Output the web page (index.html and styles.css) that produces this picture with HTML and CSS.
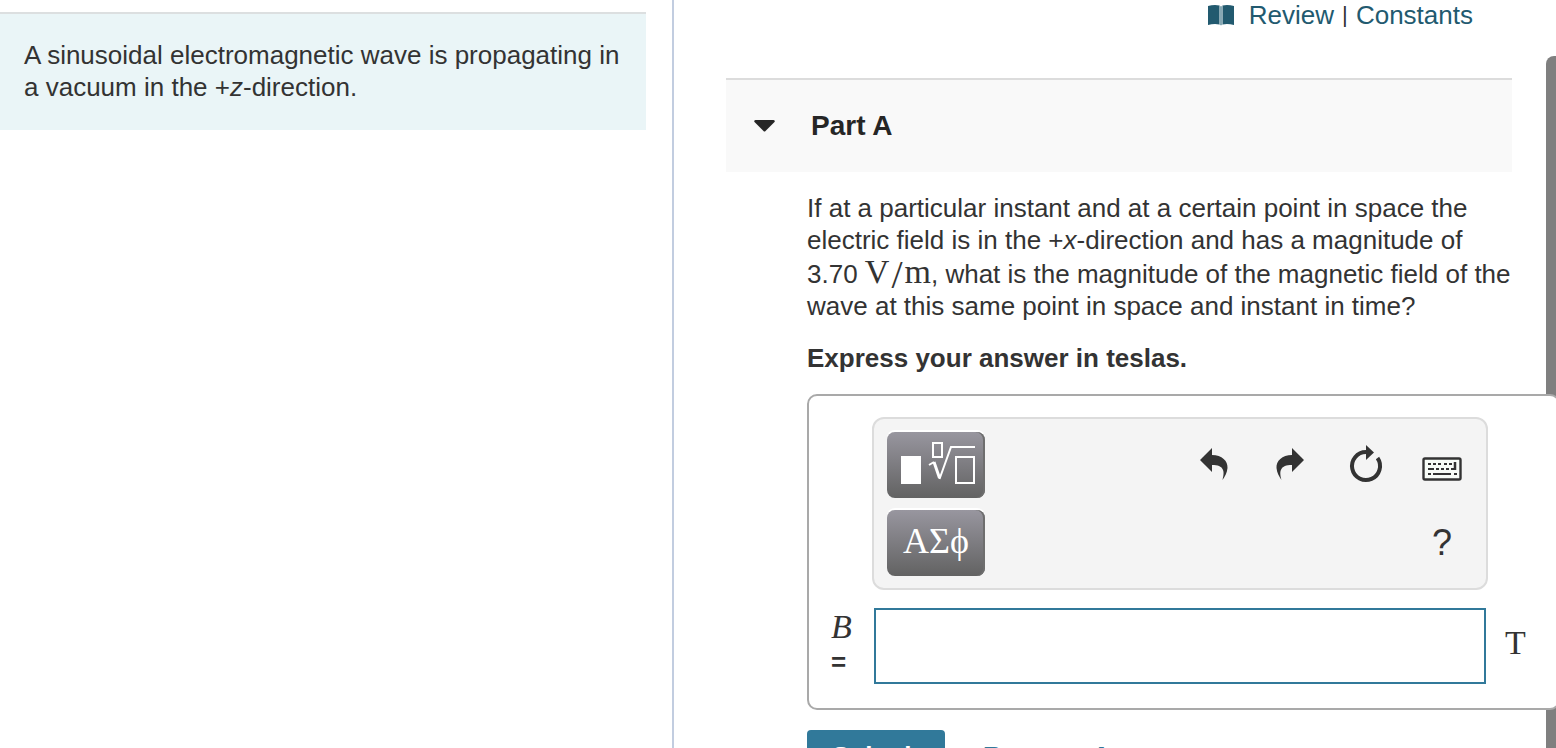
FILE: index.html
```
<!DOCTYPE html>
<html lang="en">
<head>
   <meta charset="utf-8">
   <title>Part A</title>
   <link rel="stylesheet" href="styles.css">
</head>
<body>
<div id="doc">
   <section class="intro-pane">
      <p class="intro">A sinusoidal electromagnetic wave is propagating in a vacuum in the +<em>z</em>-direction.</p>
   </section>

   <main class="problem-pane">
      <div class="scroll-thumb"></div>

      <nav class="resources">
         <svg class="book" viewBox="0 0 26 21" aria-hidden="true">
            <path d="M0 1Q6 -.5 11.5 .5V19.500Q6 18.500 0 20ZM14.500 .5Q20 -.5 26 1V20Q20 18.500 14.500 19.500Z" fill="#225a6f"/>
            <path d="M11.500 .5L13 1.500L14.500 .5V19.500L13 20.500L11.500 19.500Z" fill="#86a8b4"/>
         </svg>
         <a href="#review">Review</a><span class="sep">|</span><a href="#constants">Constants</a>
      </nav>

      <header class="part">
         <button type="button" class="toggle" aria-label="Collapse Part A">
            <svg width="22" height="12" viewBox="0 0 22 12"><path d="M1.500 0H19.500Q21.500 .5 20.500 2L11.500 11Q10.500 12 9.500 11L.5 2Q-.5 .5 1.500 0Z" fill="#262626"/></svg>
         </button>
         <h1>Part A</h1>
      </header>

      <div class="question">
         <p>If at a particular instant and at a certain point in space the electric field is in the +<em>x</em>-direction and has a magnitude of 3.70 <span class="math">V<span class="slash">/</span>m</span>, what is the magnitude of the magnetic field of the wave at this same point in space and instant in time?</p>
         <p class="instructions">Express your answer in teslas.</p>

         <form>
            <div class="answer-box">
               <div class="toolbar">
                  <div class="tool-row">
                     <button type="button" class="palette" aria-label="Templates">
                        <svg width="76" height="44" viewBox="0 0 76 44" fill="none" stroke="#fff">
                           <path d="M3 13H23V41H3Z" fill="#fff" stroke="none"/>
                           <path d="M35 0H44V14H35Z" stroke-width="2"/>
                           <path d="M31 22L36 19" stroke-width="2"/>
                           <path d="M36 19L41.500 35" stroke-width="3"/>
                           <path d="M41.500 36L53 4H77" stroke-width="2"/>
                           <path d="M58 14H76V40H58Z" stroke-width="2"/>
                        </svg>
                     </button>
                     <div class="tools">
                        <button type="button" class="tool" aria-label="Undo">
                           <svg width="28" height="34" viewBox="0 0 28 34"><path d="M0 12L12 0V7C22 7 28 13 27.500 20C27 25 25 28 22.500 32C25 23 24 17 12 17V24Z" fill="#333"/></svg>
                        </button>
                        <button type="button" class="tool" aria-label="Redo">
                           <svg width="28" height="34" viewBox="0 0 28 34"><path d="M28 12L16 0V7C6 7 0 13 .5 20C1 25 3 28 5.500 32C3 23 4 17 16 17V24Z" fill="#333"/></svg>
                        </button>
                        <button type="button" class="tool" aria-label="Reset">
                           <svg width="34" height="38" viewBox="0 0 34 38"><path d="M17 6A14 14 0 1 0 28.500 12" fill="none" stroke="#333" stroke-width="4"/><path d="M17 -1L25 6.500L17 14Z" fill="#333"/></svg>
                        </button>
                        <button type="button" class="tool" aria-label="Keyboard shortcuts">
                           <svg class="keys" width="40" height="24" viewBox="0 0 40 24">
                              <rect x="1.500" y="1.500" width="37" height="21" rx="1.500" fill="#f7fcf7" stroke="#333" stroke-width="2.400"/>
                              <path d="M6 7H9M11 7H14M16 7H19M22 7H25M27 7H30M6 12H12M14 12H17M19 12H22M24 12H27M29 12H34M6 17H9M11 17H29M32 17H35" fill="none" stroke="#333" stroke-width="2.200"/>
                              <path d="M33 5V13" fill="none" stroke="#333" stroke-width="2.500"/>
                           </svg>
                        </button>
                     </div>
                  </div>
                  <div class="tool-row">
                     <button type="button" class="palette greek" aria-label="Greek symbols">ΑΣϕ</button>
                     <div class="tools">
                        <button type="button" class="tool help">?</button>
                     </div>
                  </div>
               </div>

               <div class="answer-row">
                  <label for="answer"><i>B</i><span class="equals">=</span></label>
                  <input type="text" id="answer" name="answer" autocomplete="off">
                  <span class="unit">T</span>
               </div>
            </div>

            <div class="actions">
               <button type="submit" class="submit">Submit</button>
               <a href="#answer-request">Request Answer</a>
            </div>
         </form>
      </div>
   </main>
</div>
</body>
</html>
```

FILE: styles.css
```
* { box-sizing: border-box; }
body { margin: 0; background: #fff; color: #333; font: 26px/32px "Liberation Sans", Arial, Helvetica, sans-serif; }
h1, p { margin: 0; }
button, input { font-family: inherit; color: inherit; }
button { padding: 0; border: 0; background: none; cursor: pointer; }
svg { display: block; overflow: visible; }

#doc { display: grid; grid-template-columns: 337fr 441fr; height: 100vh; overflow: hidden; }

/* left pane */
.intro-pane { padding: 12px 26px 0 0; border-right: 2px solid #c2cde0; }
.intro { padding: 25px 24px 27px; border-top: 2px solid #dcdfe0; background: #eaf5f7; }

/* right pane */
.problem-pane { position: relative; min-width: 0; padding: 0 44px 0 52px; overflow: hidden; }
.scroll-thumb { position: absolute; top: 56px; right: 0; bottom: 0; width: 10px; border-radius: 8px 0 0 0; background: #7f7f7f; }

.resources { display: flex; justify-content: flex-end; align-items: center; height: 30px; padding-right: 39px; }
.resources a { color: #225a6f; text-decoration: none; }
.resources .sep { width: 22px; font-size: 22px; text-align: center; }
.book { width: 26px; height: 21px; margin-right: 15px; }

.part { display: flex; align-items: center; margin-top: 48px; padding: 30px 28px; border-top: 2px solid #dcdcdc; background: #f9f9f9; }
.part h1 { margin-left: 35px; font-size: 28px; line-height: 32px; color: #262626; }

.question { padding: 20px 0 0 81px; }
.question > p { margin-right: -4px; }
.math { font-family: "Liberation Serif", "Times New Roman", serif; font-size: 34px; line-height: 32px; }
.slash { padding: 0 2px; font-size: 40px; line-height: 0; vertical-align: -5px; }
.question > .instructions { margin-top: 20px; font-weight: bold; }

/* answer */
.answer-box { position: relative; margin: 20px -48px 0 0; padding: 21px 0 24px; border: 2px solid #a9a9a9; border-radius: 10px; background: #fff; }
.toolbar { display: grid; gap: 12px; margin: 0 70px 0 63px; padding: 13px 24px 12px 13px; border: 2px solid #dcdcdc; border-radius: 12px; background: #f4f4f4; }
.tool-row { display: flex; justify-content: space-between; align-items: center; }
.palette { display: flex; justify-content: center; align-items: center; width: 98px; height: 66px; border-radius: 8px; background: linear-gradient(#98969f, #626262); box-shadow: 0 -2px 0 #fff, inset -2px 0 0 #6e6e6e; color: #fff; }
.greek { padding-bottom: 4px; font: 36px/40px "Liberation Serif", "Times New Roman", serif; }
.tools { display: flex; gap: 36px; }
.tool { display: flex; justify-content: center; align-items: center; width: 40px; height: 40px; }
.keys { margin-top: 8px; }
.help { font-size: 36px; line-height: 40px; }

.answer-row { display: flex; margin-top: 18px; padding-left: 22px; }
.answer-row label { display: flex; flex-direction: column; width: 43px; }
.answer-row i, .unit { font-family: "Liberation Serif", "Times New Roman", serif; font-size: 34px; line-height: 38px; }
.equals { font-weight: bold; }
.answer-row input { flex: 1; min-width: 0; height: 76px; padding: 0 12px; border: 2px solid #31799a; border-radius: 0; background: #fff; font-size: 26px; outline: none; }
.unit { width: 72px; padding: 16px 0 0 19px; }

.actions { display: flex; align-items: baseline; gap: 38px; margin-top: 20px; font-weight: bold; }
.submit { padding: 12px 25px 14px; border-radius: 4px; background: #31799a; color: #fff; font-size: 26px; font-weight: bold; line-height: 28px; }
.actions a { color: #31799a; text-decoration: none; }
```
